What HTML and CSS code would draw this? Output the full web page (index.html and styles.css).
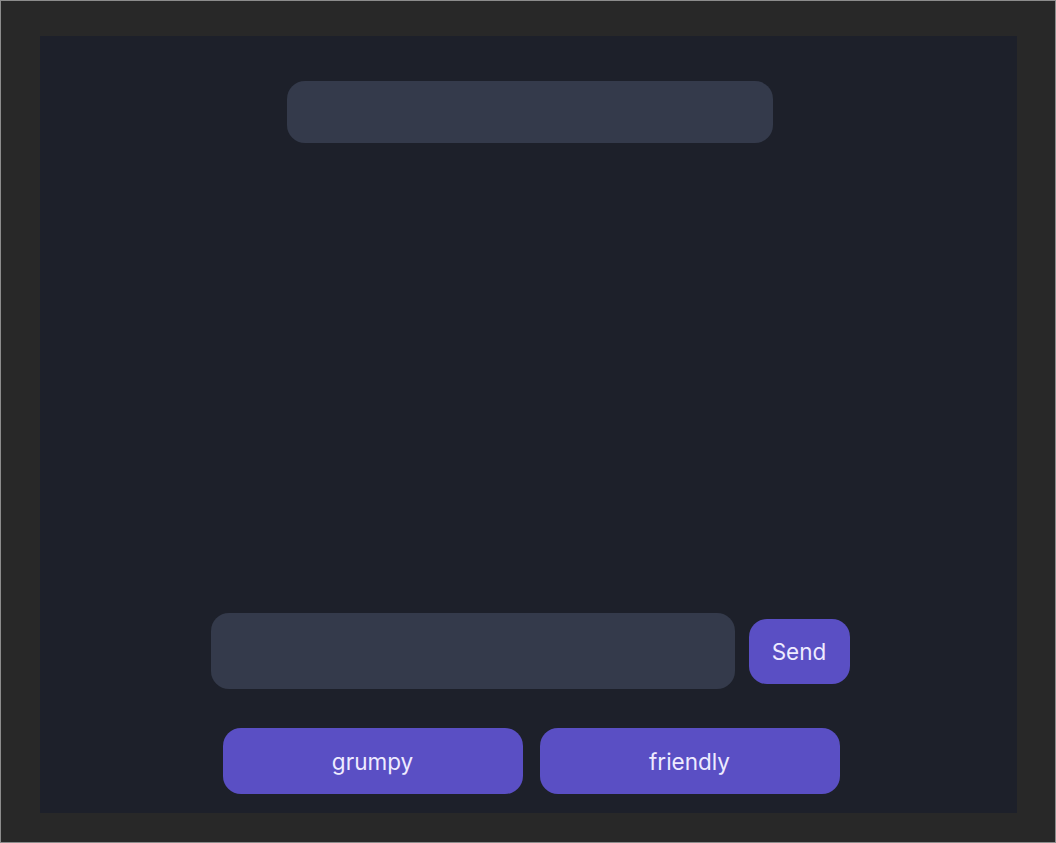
FILE: index.html
```html
<!DOCTYPE html>
<html>
<head>
<meta charset="utf-8">
<link rel="stylesheet" href="styles.css">
</head>
<body>
<div class="frame">
  <main class="app">
    <div class="title-bar"></div>
    <div class="spacer"></div>
    <div class="composer">
      <div class="input"></div>
      <button class="btn send">Send</button>
    </div>
    <div class="moods">
      <button class="btn mood">grumpy</button>
      <button class="btn mood">friendly</button>
    </div>
  </main>
</div>
</body>
</html>
```

FILE: styles.css
```css
* { box-sizing: border-box; }
html, body { margin: 0; padding: 0; }
body {
  width: 1056px;
  height: 843px;
  font-family: Inter, "Noto Sans", sans-serif;
}
.frame {
  width: 1056px;
  height: 843px;
  border: 1px solid #8c8c8c;
  background: #282828;
  padding: 35px 38px 29px 39px;
}
.app {
  height: 100%;
  background: #1d202a;
  display: flex;
  flex-direction: column;
  align-items: center;
  padding: 45px 0 19px 3px;
}
.title-bar {
  width: 486px;
  height: 62px;
  border-radius: 18px;
  background: #343a4b;
}
.spacer { flex: 1; }
.composer {
  display: flex;
  align-items: center;
  gap: 14px;
}
.input {
  width: 524px;
  height: 76px;
  border-radius: 18px;
  background: #343a4b;
}
.btn {
  border: none;
  background: #5a4fc4;
  color: #eeebff;
  font-family: Inter, "Noto Sans", sans-serif;
  font-size: 22.5px;
  font-weight: 400;
  padding: 0;
}
.send {
  width: 101px;
  height: 65px;
  border-radius: 18px;
}
.moods {
  display: flex;
  gap: 17px;
  margin-top: 39px;
  margin-left: 2px;
}
.mood {
  width: 300px;
  height: 66px;
  border-radius: 18px;
}
```
